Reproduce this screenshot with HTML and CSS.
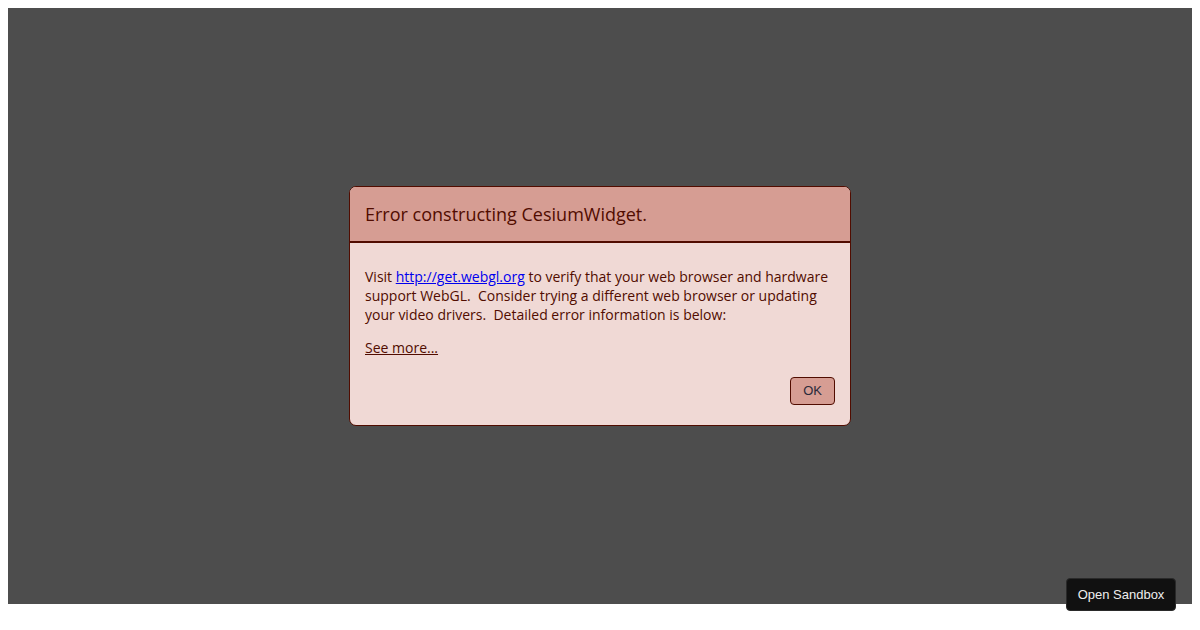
FILE: index.html
```html
<!DOCTYPE html>
<html lang="en">
<head>
  <meta charset="UTF-8" />
  <title>Cesium Viewer</title>
  <meta name="viewport" content="width=device-width, initial-scale=1.0" />
  <link rel="stylesheet" href="styles.css">
</head>
<body>

  <div class="viewer">
    <div class="errorPanel">
      <div class="errorPanel-header">Error constructing CesiumWidget.</div>
      <div class="errorPanel-scroll">
        <p>Visit <a href="#">http://get.webgl.org</a> to verify that your web browser and hardware support WebGL.&nbsp; Consider trying a different web browser or updating your video drivers.&nbsp; Detailed error information is below:</p>
        <div class="errorPanel-more">See more...</div>
      </div>
      <div class="errorPanel-buttons">
        <button type="button">OK</button>
      </div>
    </div>
  </div>

  <button type="button" class="sandbox">Open Sandbox</button>

</body>
</html>
```

FILE: styles.css
```css
body {
  margin: 8px;
  background: #fff;
}

.viewer {
  height: 596px;
  background: #4d4d4d;
  display: flex;
  align-items: center;
  justify-content: center;
}

.errorPanel {
  width: 500px;
  border: 1px solid #510c00;
  border-radius: 7px;
  background: #f0d9d5;
  color: #510c00;
  font-family: "Open Sans", Verdana, sans-serif;
  font-size: 14px;
}

.errorPanel-header {
  font-size: 18px;
  line-height: 24px;
  background: #d69d93;
  border-bottom: 2px solid #510c00;
  border-radius: 6px 6px 0 0;
  padding: 15px;
}

.errorPanel-scroll {
  padding: 0 15px;
  margin-top: 24px;
  line-height: 19px;
}

.errorPanel-scroll p {
  margin: 14px 0;
}

.errorPanel-scroll a {
  color: #0000ee;
}

.errorPanel-more {
  text-decoration: underline;
  cursor: pointer;
}

.errorPanel-buttons {
  padding: 0 15px;
  margin: 20px 0 20px;
  text-align: right;
}

.errorPanel-buttons button {
  font-family: "Liberation Sans", Arial, sans-serif;
  font-size: 13px;
  line-height: 16px;
  padding: 5px 12px;
  border: 1px solid #510c00;
  border-radius: 4px;
  background: #d69d93;
  color: #2a2a3a;
  cursor: pointer;
}

.sandbox {
  position: fixed;
  right: 24px;
  bottom: 19px;
  width: 110px;
  height: 33px;
  padding: 0;
  background: #111;
  color: #eee;
  border: 1px solid #2a2a2a;
  border-radius: 4px;
  font-family: "Liberation Sans", Arial, sans-serif;
  font-size: 13px;
  cursor: pointer;
}
```
